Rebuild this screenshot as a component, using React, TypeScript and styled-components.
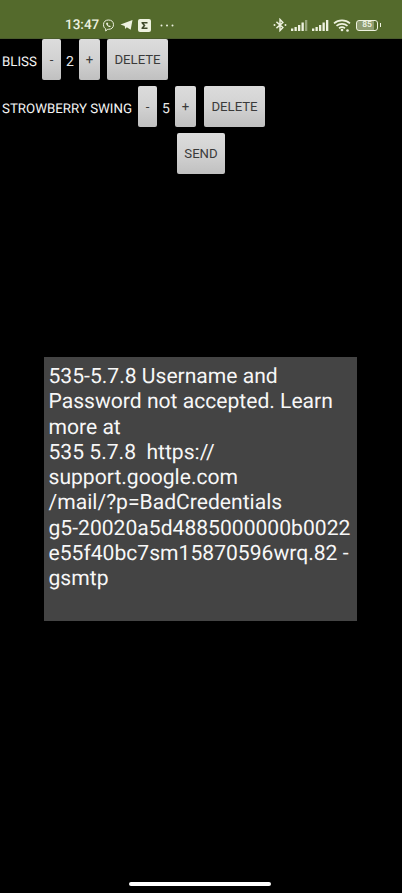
import React from "react";
import styled, { createGlobalStyle } from "styled-components";

const Global = createGlobalStyle`
  html, body { margin: 0; padding: 0; background: #000; }
  body { font-family: Roboto, "Liberation Sans", sans-serif; text-rendering: geometricPrecision; }
`;

const Page = styled.div`
  width: 402px;
  height: 893px;
  background: #000;
  display: flex;
  flex-direction: column;
  overflow: hidden;
`;

const StatusBar = styled.div`
  height: 38px;
  flex: none;
  background: #546a2c;
  border-bottom: 1px solid #4a5c2c;
  box-sizing: content-box;
  display: flex;
  align-items: flex-end;
`;

const StatusInner = styled.div`
  height: 24px;
  width: 100%;
  display: flex;
  align-items: center;
  color: #eef2e0;
  padding-bottom: 1px;
`;

const Clock = styled.span`
  margin-left: 65px;
  font-size: 13.5px;
  font-weight: 500;
  width: 36px;
`;

const LeftIcons = styled.div`
  display: flex;
  align-items: center;
  gap: 5px;
  margin-left: 1px;
`;

const RightIcons = styled.div`
  margin-left: auto;
  margin-right: 24px;
  display: flex;
  align-items: center;
  gap: 4px;
`;

const Rows = styled.div`
  display: flex;
  flex-direction: column;
  gap: 6px;
`;

const Row = styled.div`
  display: flex;
  align-items: center;
  height: 41px;
`;

const Label = styled.span<{ $w: number }>`
  width: ${(p) => p.$w}px;
  padding: 5px 0 0 2px;
  box-sizing: border-box;
  color: #f4f4f4;
  font-size: 13.3px;
  white-space: nowrap;
`;

const Count = styled.span`
  width: 18px;
  padding-top: 5px;
  text-align: center;
  color: #e8e8e8;
  font-size: 14px;
`;

const Btn = styled.button<{ $w: number; $ml?: number }>`
  width: ${(p) => p.$w}px;
  height: 41px;
  margin-left: ${(p) => p.$ml ?? 0}px;
  padding: 1px 0 0;
  border: 0;
  border-radius: 2px;
  background: linear-gradient(#dcdcdc, #d2d2d2 50%, #c0c0c0);
  color: #3a3a3a;
  font-family: Roboto, "Liberation Sans", sans-serif;
  font-size: 13.2px;
  line-height: 40px;
`;

const SendRow = styled.div`
  display: flex;
  height: 40px;
  padding-left: 177px;
`;

const Toast = styled.div`
  width: 313px;
  height: 264px;
  margin: 184px 0 0 44px;
  padding: 7px 0 0 4.5px;
  box-sizing: border-box;
  background: #444444;
  color: #f7f7f7;
  font-size: 21.1px;
  line-height: 25.25px;
  white-space: pre;
`;

const HomeBar = styled.div`
  width: 142px;
  height: 4px;
  border-radius: 2px;
  background: #fff;
  margin: 261px 0 0 129px;
  flex: none;
`;

const Viber = () => (
  <svg width="13" height="13" viewBox="0 0 13 13" fill="none" stroke="currentColor" strokeWidth="1">
    <path d="M6.5 1C3.5 1 1.5 2.6 1.5 5.7c0 2 .8 3.4 2.2 4.1V12l2-1.7h.8c3 0 5-1.7 5-4.6C11.5 2.6 9.5 1 6.5 1z" />
    <path d="M4.5 3.7c-.6.5-.4 1.3.3 2.4.7 1 1.6 1.8 2.5 2 .7.1 1.3-.3 1.4-.9L7.7 6.4l-.7.5c-.5-.3-.9-.8-1.2-1.4l.5-.6-.8-1.3z" fill="currentColor" stroke="none" />
  </svg>
);

const Telegram = () => (
  <svg width="13" height="12" viewBox="0 0 13 12" fill="currentColor">
    <path d="M12.5 1 10.7 10.8 6.8 8.2 5.2 10 4.7 7 .5 5.5z" />
  </svg>
);

const SigmaBadge = () => (
  <svg width="13" height="13" viewBox="0 0 13 13">
    <rect width="13" height="13" rx="2" fill="#eef2e0" />
    <path d="M3.5 3h6v1.5H5.8L7.5 6.500 5.800 8.500h3.700V10h-6V8.800L5.500 6.500 3.500 4.200z" fill="#3f4a2a" />
  </svg>
);

const Dots = () => (
  <svg width="14" height="3" viewBox="0 0 14 3" fill="currentColor" style={{ marginLeft: 4 }}>
    <circle cx="1.5" cy="1.5" r="1" />
    <circle cx="7" cy="1.5" r="1" />
    <circle cx="12.5" cy="1.5" r="1" />
  </svg>
);

const Bluetooth = () => (
  <svg width="14" height="14" viewBox="0 0 13 13" fill="none" stroke="currentColor" strokeWidth="1.3">
    <path d="M3.2 3.6 9.2 8.9 6.5 11.7V1.3L9.2 4.1 3.2 9.4" />
    <circle cx="1.4" cy="6.5" r=".9" fill="currentColor" stroke="none" />
    <circle cx="11.6" cy="6.5" r=".9" fill="currentColor" stroke="none" />
  </svg>
);

const Signal = ({ dimLast }: { dimLast?: boolean }) => (
  <svg width="17" height="11" viewBox="0 0 17 11" fill="currentColor">
    <rect x="0" y="8.5" width="2.3" height="2.5" />
    <rect x="3.5" y="7" width="2.3" height="4" />
    <rect x="7" y="5" width="2.3" height="6" />
    <rect x="10.5" y="2.5" width="2.3" height="8.5" />
    <rect x="14" y="0" width="2.3" height="11" opacity={dimLast ? 0.45 : 1} />
  </svg>
);

const Wifi = () => (
  <svg width="18" height="13" viewBox="0 0 18 13" fill="none" stroke="currentColor" strokeWidth="1.7">
    <path d="M1 4.3C5.5.4 12.5.4 17 4.3" />
    <path d="M3.5 6.8c3.2-2.6 7.8-2.6 11 0" />
    <path d="M6 9.2c1.8-1.3 4.2-1.3 6 0" />
    <circle cx="9" cy="11" r="1.3" fill="currentColor" stroke="none" />
    <circle cx="14.5" cy="11.5" r="1.3" fill="currentColor" stroke="none" />
  </svg>
);

const BatteryShell = styled.div`
  position: relative;
  width: 20px;
  height: 9px;
  border: 1px solid #eef2e0;
  border-radius: 3px;
  display: flex;
  align-items: center;
  justify-content: center;
  background: linear-gradient(90deg, #8f9d72 85%, transparent 85%);
  color: #f2f5e8;
  font-size: 8.5px;
  font-weight: 500;
  line-height: 9px;
  margin-left: 1px;
`;

const BatteryTip = styled.span`
  position: absolute;
  right: -4px;
  top: 2.5px;
  width: 1.5px;
  height: 4px;
  background: #eef2e0;
`;

export default function App() {
  return (
    <Page>
      <Global />
      <StatusBar>
        <StatusInner>
          <Clock>13:47</Clock>
          <LeftIcons>
            <Viber />
            <Telegram />
            <SigmaBadge />
            <Dots />
          </LeftIcons>
          <RightIcons>
            <Bluetooth />
            <Signal dimLast />
            <Signal />
            <Wifi />
            <BatteryShell>
              85
              <BatteryTip />
            </BatteryShell>
          </RightIcons>
        </StatusInner>
      </StatusBar>
      <Rows>
        <Row>
          <Label $w={42}>BLISS</Label>
          <Btn $w={19}>-</Btn>
          <Count>2</Count>
          <Btn $w={21}>+</Btn>
          <Btn $w={61} $ml={7}>DELETE</Btn>
        </Row>
        <Row>
          <Label $w={138}>STROWBERRY SWING</Label>
          <Btn $w={19}>-</Btn>
          <Count>5</Count>
          <Btn $w={21}>+</Btn>
          <Btn $w={61} $ml={8}>DELETE</Btn>
        </Row>
        <SendRow>
          <Btn $w={48}>SEND</Btn>
        </SendRow>
      </Rows>
      <Toast>{`535-5.7.8 Username and
Password not accepted. Learn
more at
535 5.7.8  https://
support.google.com
/mail/?p=BadCredentials
g5-20020a5d4885000000b0022
e55f40bc7sm15870596wrq.82 -
gsmtp`}</Toast>
      <HomeBar />
    </Page>
  );
}
